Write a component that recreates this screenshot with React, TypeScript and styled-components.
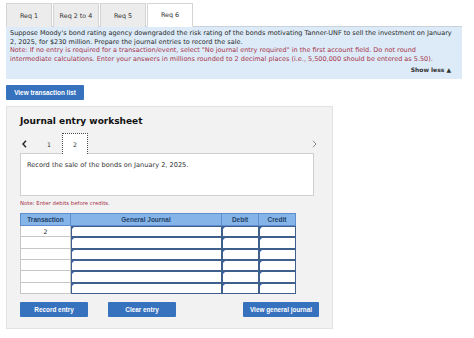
import React from 'react'
import styled, { createGlobalStyle } from 'styled-components'

const GlobalStyle = createGlobalStyle`
  body {
    margin: 0;
    background: #fff;
    font-family: "DejaVu Sans", Verdana, sans-serif;
    color: #222;
  }
`

const Page = styled.div`
  width: 456px;
  padding: 3px 0 0 6px;
`

const TabBar = styled.div`
  display: flex;
  height: 24px;
  gap: 1px;
`

const Tab: any = styled.div`
  width: 46px;
  height: 24px;
  box-sizing: border-box;
  display: flex;
  align-items: center;
  justify-content: center;
  font-size: 6.4px;
  color: #333;
  background: ${(props: any) => (props.active ? '#fff' : '#ececec')};
  border: 1px solid #d4d4d4;
  border-bottom: ${(props: any) => (props.active ? '1px solid #fff' : 'none')};
  position: relative;
  z-index: 1;
`

const InfoBox = styled.div`
  background: #dcebf7;
  border-top: 1px solid #c9d2da;
  margin-top: -1px;
  height: 53px;
  box-sizing: border-box;
  padding: 2px 8px 0 4px;
  font-size: 6.5px;
  line-height: 8.6px;
  color: #2a2a2a;
`

const Note = styled.span`
  color: #a8344a;
`

const ShowLess = styled.div`
  text-align: right;
  margin-top: 3px;
  font-weight: bold;
  font-size: 6px;
  color: #333;
  padding-right: 3px;
`

const Button: any = styled.div`
  width: ${(props: any) => props.w}px;
  height: 15px;
  background: #3672bd;
  border-radius: 1px;
  color: #fff;
  font-family: "Liberation Sans", Arial, sans-serif;
  font-weight: bold;
  font-size: 6.4px;
  display: flex;
  align-items: center;
  justify-content: center;
  margin-left: ${(props: any) => props.ml || 0}px;
`

const TopButtonRow = styled.div`
  margin-top: 6px;
`

const Panel = styled.div`
  margin-top: 6px;
  width: 327px;
  height: 223px;
  box-sizing: border-box;
  background: #f2f2f2;
  border: 1px solid #e2e2e2;
  padding: 8px 13px 0 13px;
`

const Title = styled.div`
  font-weight: bold;
  font-size: 9px;
  line-height: 12px;
  color: #111;
`

const Pager = styled.div`
  display: flex;
  align-items: stretch;
  height: 21px;
  margin-top: 6px;
  position: relative;
  z-index: 1;
`

const Arrow: any = styled.div`
  width: 8px;
  display: flex;
  align-items: center;
  justify-content: center;
  margin-left: ${(props: any) => props.ml || 0}px;
`

const PageNum: any = styled.div`
  width: 26px;
  box-sizing: border-box;
  display: flex;
  align-items: center;
  justify-content: center;
  font-size: 6.2px;
  color: #333;
  margin-left: ${(props: any) => props.ml || 0}px;
  background: ${(props: any) => (props.active ? '#fff' : 'transparent')};
  border: ${(props: any) => (props.active ? '1px dotted #4a4a4a' : '1px solid transparent')};
  border-bottom: none;
`

const RecordBox = styled.div`
  width: 294px;
  height: 43px;
  box-sizing: border-box;
  background: #fff;
  border: 1px solid #cfcfcf;
  margin-top: -1px;
  padding: 7px 6px;
  font-size: 6.6px;
  line-height: 8px;
  color: #333;
`

const SmallNote = styled.div`
  color: #a8344a;
  font-size: 5.4px;
  line-height: 8px;
  margin-top: 3px;
`

const Grid = styled.div`
  margin-top: 6px;
  display: grid;
  grid-template-columns: 51px 151px 37px 37px;
  grid-template-rows: 13px repeat(6, 11.33px);
  width: 276px;
`

const HeadCell = styled.div`
  background: #85b5e8;
  border: 1px solid #5d8fcf;
  margin-left: -1px;
  display: flex;
  align-items: center;
  justify-content: center;
  font-family: "Liberation Sans", Arial, sans-serif;
  font-size: 6.5px;
  font-weight: bold;
  color: #233f66;

  &:first-child {
    margin-left: 0;
  }
`

const TxCell = styled.div`
  background: #fff;
  border: 1px solid #c6c6c6;
  border-top: none;
  display: flex;
  align-items: center;
  justify-content: center;
  font-size: 6.2px;
  color: #222;
`

const InputCell = styled.div`
  background: #fff;
  border: 1px solid #3f5f8c;
  position: relative;

  &::before {
    content: '';
    position: absolute;
    left: 0;
    top: 0;
    border-top: 2.5px solid #2d66b8;
    border-right: 2.5px solid transparent;
  }
`

const BottomRow = styled.div`
  display: flex;
  margin-top: 8px;
`

const Chevron = ({ dir, color }: { dir: 'left' | 'right'; color: string }) => (
  <svg width="5" height="8" viewBox="0 0 5 8">
    <path
      d={dir === 'left' ? 'M4 0.8 L1 4 L4 7.2' : 'M1 0.8 L4 4 L1 7.2'}
      fill="none"
      stroke={color}
      strokeWidth={dir === 'left' ? 1.4 : 1}
    />
  </svg>
)

const rows = ['2', '', '', '', '', '']

export default function App() {
  return (
    <Page>
      <GlobalStyle />
      <TabBar>
        <Tab>Req 1</Tab>
        <Tab>Req 2 to 4</Tab>
        <Tab>Req 5</Tab>
        <Tab active>Req 6</Tab>
      </TabBar>
      <InfoBox>
        Suppose Moody's bond rating agency downgraded the risk rating of the bonds motivating Tanner-UNF to sell the investment on January 2, 2025, for $230 million. Prepare the journal entries to record the sale.
        <br />
        <Note>
          Note: If no entry is required for a transaction/event, select "No journal entry required" in the first account field. Do not round intermediate calculations. Enter your answers in millions rounded to 2 decimal places (i.e., 5,500,000 should be entered as 5.50).
        </Note>
        <ShowLess>Show less ▲</ShowLess>
      </InfoBox>
      <TopButtonRow>
        <Button w={78}>View transaction list</Button>
      </TopButtonRow>
      <Panel>
        <Title>Journal entry worksheet</Title>
        <Pager>
          <Arrow>
            <Chevron dir="left" color="#222" />
          </Arrow>
          <PageNum ml={8}>1</PageNum>
          <PageNum active>2</PageNum>
          <Arrow ml={222}>
            <Chevron dir="right" color="#888" />
          </Arrow>
        </Pager>
        <RecordBox>Record the sale of the bonds on January 2, 2025.</RecordBox>
        <SmallNote>Note: Enter debits before credits.</SmallNote>
        <Grid>
          <HeadCell>Transaction</HeadCell>
          <HeadCell>General Journal</HeadCell>
          <HeadCell>Debit</HeadCell>
          <HeadCell>Credit</HeadCell>
          {rows.map((r, i) => (
            <React.Fragment key={i}>
              <TxCell>{r}</TxCell>
              <InputCell />
              <InputCell />
              <InputCell />
            </React.Fragment>
          ))}
        </Grid>
        <BottomRow>
          <Button w={68}>Record entry</Button>
          <Button w={68} ml={20}>Clear entry</Button>
          <Button w={76} ml={67}>View general journal</Button>
        </BottomRow>
      </Panel>
    </Page>
  )
}
